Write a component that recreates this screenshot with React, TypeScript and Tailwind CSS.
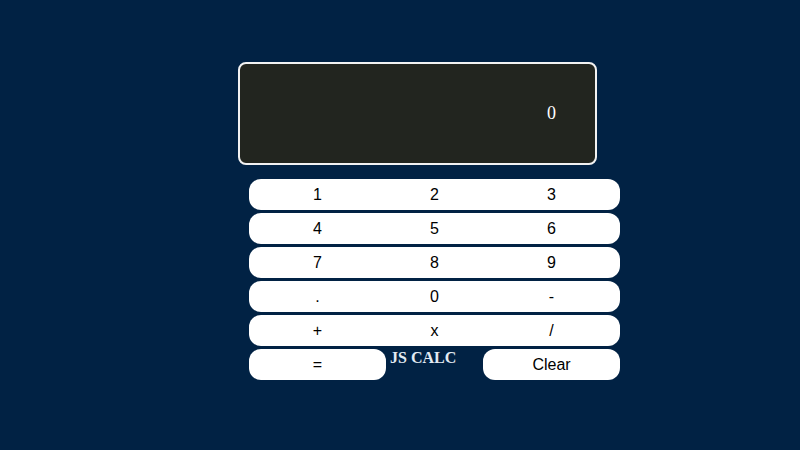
import React from "react";

const rows = [
  ["1", "2", "3"],
  ["4", "5", "6"],
  ["7", "8", "9"],
  [".", "0", "-"],
  ["+", "x", "/"],
];

export default function App() {
  return (
    <div className="h-[450px] w-[800px] bg-[#012244] pl-[238px] pt-[62px]">
      <div className="flex h-[103px] w-[359px] items-center justify-end rounded-[8px] border-2 border-[#f2f2f2] bg-[#22251f] pr-[39px]">
        <span className="text-[18px] text-white" style={{ fontFamily: '"Liberation Serif", serif' }}>
          0
        </span>
      </div>
      <div className="ml-[11px] mt-[14px] flex w-[371px] flex-col gap-[3px]" style={{ fontFamily: '"Liberation Sans", Arial, sans-serif' }}>
        {rows.map((row) => (
          <div key={row.join("")} className="grid h-[31px] grid-cols-[137px_1fr_137px] rounded-[12px] bg-white text-[16px] text-black">
            {row.map((k) => (
              <button key={k} className="flex items-center justify-center">
                {k}
              </button>
            ))}
          </div>
        ))}
        <div className="grid h-[31px] grid-cols-[137px_1fr_137px] text-[16px] text-black">
          <button className="flex items-center justify-center rounded-[12px] bg-white">=</button>
          <div
            className="pl-[4px] text-[16px] font-bold leading-[18px] text-[#e3ebf3]"
            style={{ fontFamily: '"Liberation Serif", serif' }}
          >
            JS CALC
          </div>
          <button className="flex items-center justify-center rounded-[12px] bg-white">Clear</button>
        </div>
      </div>
    </div>
  );
}
